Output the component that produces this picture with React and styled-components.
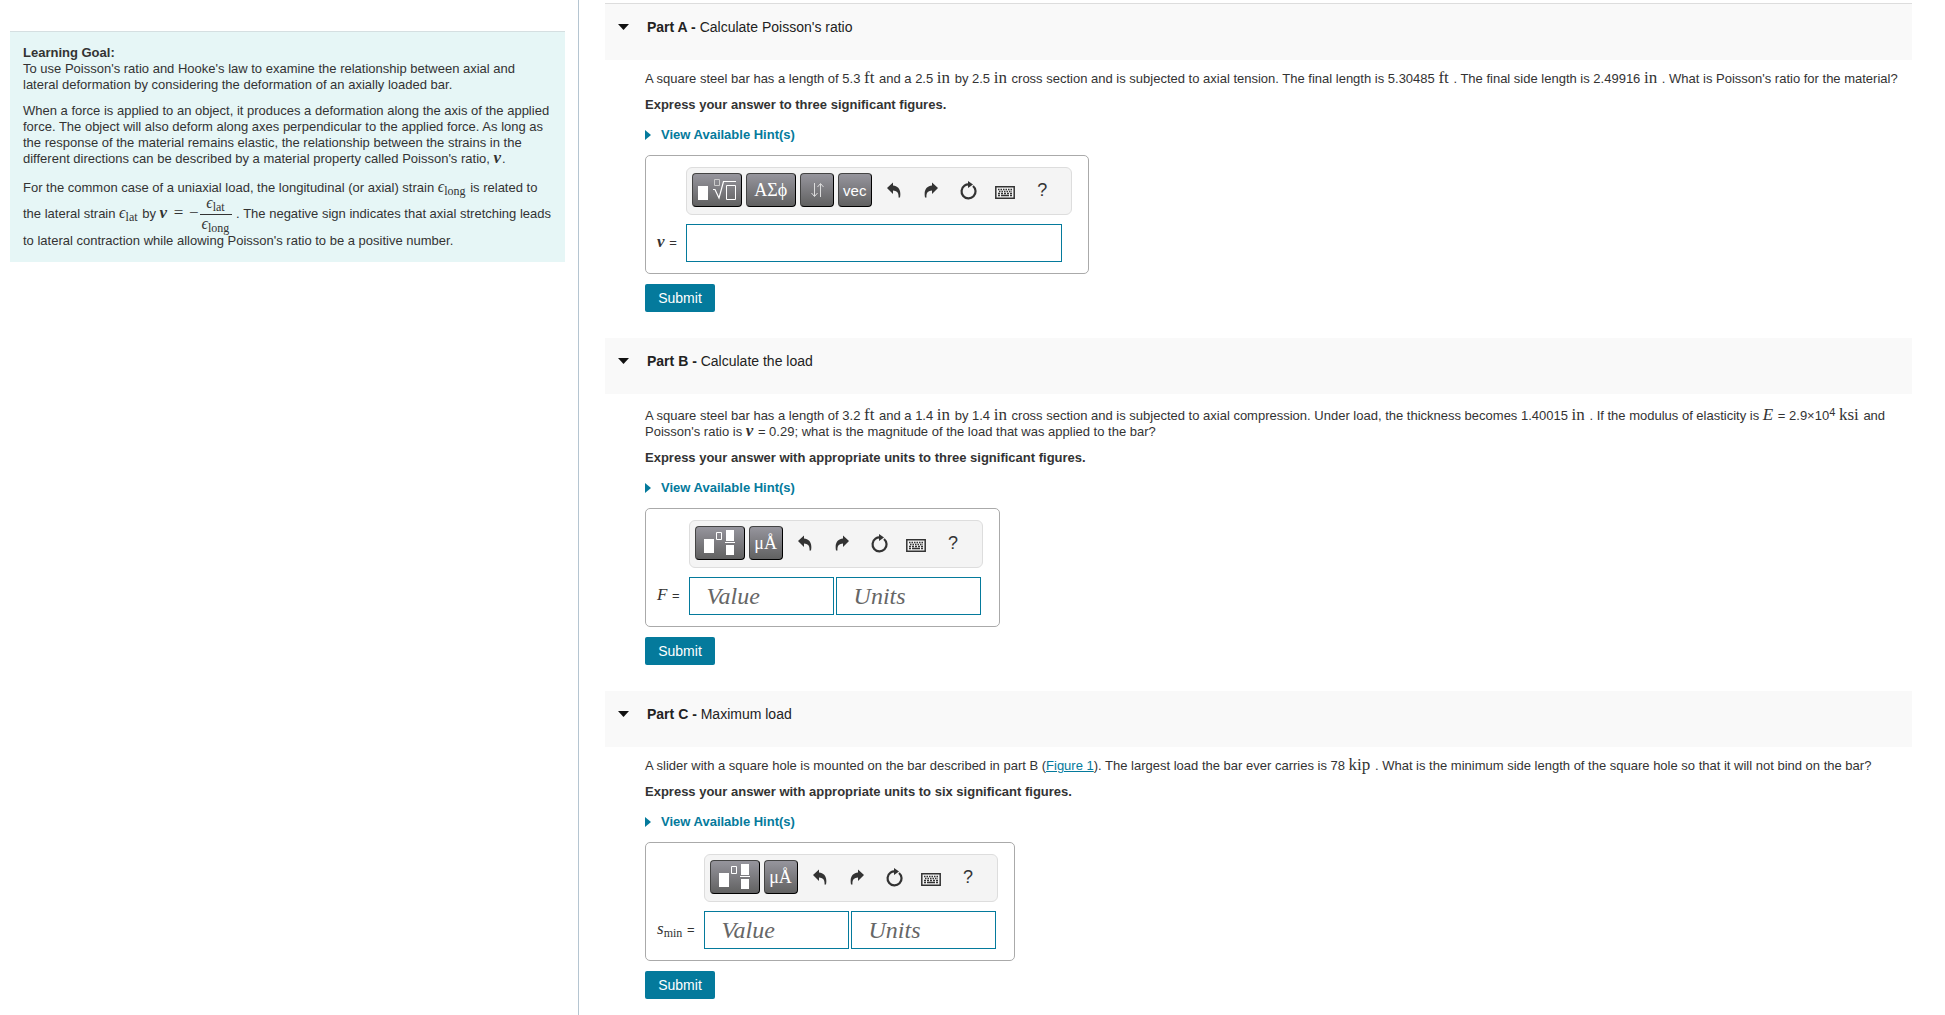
import React from 'react';
import styled, { createGlobalStyle } from 'styled-components';

const teal = '#047a9c';

const GlobalStyle = createGlobalStyle`
  * {
    box-sizing: border-box;
  }
  body {
    margin: 0;
    background: #fff;
    color: #333;
    font: 13px/16px "Liberation Sans", Arial, sans-serif;
  }
  button, input {
    font-family: inherit;
  }
`;

const Page = styled.div`
  display: grid;
  grid-template-columns: minmax(300px, 579px) minmax(0, 1fr);
  min-height: 100vh;
`;

const Sidebar = styled.aside`
  padding: 31px 13px 0 10px;
  border-right: 1px solid #b5c5d1;
`;

const Goal = styled.section`
  padding: 13px;
  border-top: 1px solid #d5dfe1;
  background: #e6f6f6;
`;

const GoalTitle = styled.h1`
  margin: 0;
  font-size: 13px;
  line-height: 16px;
`;

const GoalText = styled.p`
  margin: 0 0 ${({ gap = 10 }) => gap}px;
`;

const Content = styled.main`
  padding: 3px 33px 15px 26px;
`;

const PartSection = styled.section`
  margin-bottom: 26px;
`;

const PartHeader = styled.h2`
  margin: 0;
  padding: 15px 13px 25px;
  border-top: ${({ first }) => (first ? '1px solid #ddd' : '0')};
  background: #f9f9f9;
  font-size: 14px;
  line-height: 16px;
`;

const PartToggle = styled.button`
  display: flex;
  align-items: center;
  gap: 18px;
  padding: 0;
  border: 0;
  background: none;
  color: #222;
  font-size: 14px;
  line-height: 16px;
  cursor: pointer;
`;

const PartBody = styled.div`
  padding: 11px 0 0 40px;
`;

const Question = styled.p`
  margin: 0 0 10px;
`;

const Instruction = styled.p`
  margin: 0 0 14px;
  font-weight: bold;
`;

const Hint = styled.button`
  display: flex;
  align-items: center;
  gap: 10px;
  margin-bottom: 12px;
  padding: 0;
  border: 0;
  background: none;
  color: ${teal};
  font-size: 13px;
  font-weight: bold;
  line-height: 16px;
  cursor: pointer;
`;

const FigureLink = styled.a`
  color: ${teal};
`;

const MathText = styled.span`
  padding-right: 1px;
  font-family: "Liberation Serif", "Times New Roman", serif;
  font-size: ${({ size = 17 }) => size}px;
  font-style: ${({ italic }) => (italic ? 'italic' : 'normal')};
  font-weight: ${({ heavy }) => (heavy ? 'bold' : 'normal')};
  line-height: 14px;
`;

const Operator = styled(MathText)`
  padding: 0 2px;
`;

const Sub = styled.sub`
  font-size: 12px;
  font-style: normal;
  line-height: 8px;
  vertical-align: -3px;
`;

const Sup = styled.sup`
  font-size: 11px;
  line-height: 14px;
  vertical-align: 4px;
`;

const Fraction = styled.span`
  display: inline-flex;
  flex-direction: column;
  vertical-align: middle;
  text-align: center;
`;

const Numerator = styled.span`
  padding: 0 2px 2px;
  border-bottom: 1px solid #333;
`;

const Denominator = styled.span`
  padding: 2px 2px 0;
`;

const AnswerBox = styled.div`
  display: grid;
  grid-template-columns: auto auto;
  column-gap: 9px;
  row-gap: 9px;
  width: fit-content;
  padding: 11px 16px 11px 11px;
  border: 1px solid #aaa;
  border-radius: 5px;
`;

const Toolbar = styled.div`
  display: flex;
  align-items: flex-start;
  grid-column: 2;
  height: 48px;
  padding: 5px 10px 0 5px;
  border: 1px solid #ddd;
  border-radius: 6px;
  background: #f4f4f4;
`;

const PaletteButton = styled.button`
  display: flex;
  align-items: center;
  justify-content: center;
  width: ${({ wide }) => (wide ? 50 : 34)}px;
  height: 34px;
  margin-right: 4px;
  padding: 0;
  border: 1px solid #000;
  border-top-color: #444;
  border-left-color: #444;
  border-radius: 4px;
  background: linear-gradient(#96959d, #616161);
  color: #fff;
  font-size: 15px;
`;

const SerifLabel = styled.span`
  font-family: "Liberation Serif", "Times New Roman", serif;
  font-size: 18px;
`;

const ToolButton = styled.button`
  display: flex;
  align-items: center;
  justify-content: center;
  width: 37px;
  height: 34px;
  padding: 0;
  border: 0;
  background: none;
  color: #333;
  font-size: 18px;
`;

const AnswerLabel = styled.label`
  align-self: center;
`;

const Fields = styled.div`
  display: flex;
  gap: 2px;
`;

const Field = styled.input`
  width: ${({ wide }) => (wide ? 376 : 145)}px;
  height: 38px;
  padding: 0 17px;
  border: 1px solid ${teal};
  border-radius: 0;
  background: #fff;
  font: italic 24px "Liberation Serif", "Times New Roman", serif;

  &::placeholder {
    color: #666;
    opacity: 1;
  }
`;

const Submit = styled.button`
  display: block;
  width: 70px;
  height: 28px;
  margin-top: 10px;
  padding: 0;
  border: 0;
  border-radius: 2px;
  background: ${teal};
  color: #fff;
  font-size: 14px;
`;

const ArrowDown = () => (
  <svg width="11" height="6" viewBox="0 0 11 6" aria-hidden="true">
    <path d="M0 0h11L5.5 6z" fill="#111" />
  </svg>
);

const ArrowRight = () => (
  <svg width="6" height="10" viewBox="0 0 6 10" aria-hidden="true">
    <path d="M0 0l6 5-6 5z" fill={teal} />
  </svg>
);

const RootIcon = () => (
  <svg width="38" height="22" viewBox="0 0 38 22" fill="none" stroke="#fff" aria-hidden="true">
    <path d="M0 7h10v14H0z" fill="#fff" stroke="none" />
    <path d="M16.5.5h5v6h-5z" stroke="#ccc" />
    <path d="M15 10.5h2L21 19l4.5-16.500H38" strokeWidth="1.2" />
    <path d="M28.5 6.500h9v14h-9z" />
  </svg>
);

const TemplateIcon = () => (
  <svg width="32" height="26" viewBox="0 0 32 26" fill="#fff" aria-hidden="true">
    <path d="M0 9h10v14H0z" />
    <path d="M12.5 2.5h5v7h-5z" fill="none" stroke="#fff" />
    <path d="M22 0h8v11h-8zM21 12h10v1H21zM22 15h8v10h-8z" />
  </svg>
);

const UpDownIcon = () => (
  <svg width="14" height="16" viewBox="0 0 14 16" fill="none" stroke="#ddd" aria-hidden="true">
    <path d="M4.5 1v13M1.5 11l3 3.500 3-3.500M10.5 15V2M7.5 5l3-3.500 3 3.500" />
  </svg>
);

const UndoIcon = ({ flipped }) => (
  <svg width="14" height="16" viewBox="0 0 14 16" aria-hidden="true">
    <path
      d="M0 6L6 .5V3.500C11 4 14.5 7.500 13 15.500H11.500C12 11 10 8.700 6 8.500V12z"
      fill="#333"
      transform={flipped ? 'translate(14 0) scale(-1 1)' : undefined}
    />
  </svg>
);

const ResetIcon = () => (
  <svg width="17" height="19" viewBox="0 0 17 19" fill="none" aria-hidden="true">
    <path d="M13 5A7 7 0 1 1 4.500 4.700Q6.500 3.300 9 3.500" stroke="#333" strokeWidth="2.2" />
    <path d="M8 0l5 3.500L8 7z" fill="#333" />
  </svg>
);

const KeyboardIcon = () => (
  <svg width="20" height="18" viewBox="0 -5 20 18" fill="none" stroke="#333" aria-hidden="true">
    <path d="M.8.8h18.400v11.400H.8z" strokeWidth="1.5" />
    <path d="M3 3.500h14M4 5.500h13" strokeWidth="1.3" strokeDasharray="1.5 1" />
    <path d="M3 7.500h14" strokeWidth="1.3" strokeDasharray="2 1" />
    <path d="M3 9.500h2M6 9.500h8M15 9.500h2" strokeWidth="1.5" />
  </svg>
);

const EditTools = () => (
  <>
    <ToolButton type="button" aria-label="Undo"><UndoIcon /></ToolButton>
    <ToolButton type="button" aria-label="Redo"><UndoIcon flipped /></ToolButton>
    <ToolButton type="button" aria-label="Reset"><ResetIcon /></ToolButton>
    <ToolButton type="button" aria-label="Keyboard shortcuts"><KeyboardIcon /></ToolButton>
    <ToolButton type="button" aria-label="Help">?</ToolButton>
  </>
);

const Unit = ({ children }) => <MathText>{children}</MathText>;
const Nu = () => <MathText italic heavy>ν</MathText>;
const Strain = ({ kind }) => <MathText italic size={16}>ϵ<Sub>{kind}</Sub></MathText>;

const ValueUnitsAnswer = ({ id, symbol }) => (
  <AnswerBox>
    <Toolbar>
      <PaletteButton type="button" wide aria-label="Templates"><TemplateIcon /></PaletteButton>
      <PaletteButton type="button"><SerifLabel>μÅ</SerifLabel></PaletteButton>
      <EditTools />
    </Toolbar>
    <AnswerLabel htmlFor={`${id}-value`}>{symbol} =</AnswerLabel>
    <Fields>
      <Field id={`${id}-value`} placeholder="Value" />
      <Field aria-label="Units" placeholder="Units" />
    </Fields>
  </AnswerBox>
);

const Part = ({ name, title, first, question, instruction, children }) => (
  <PartSection>
    <PartHeader first={first}>
      <PartToggle type="button" aria-expanded="true">
        <ArrowDown />
        <span><b>Part {name} -</b> {title}</span>
      </PartToggle>
    </PartHeader>
    <PartBody>
      <Question>{question}</Question>
      <Instruction>{instruction}</Instruction>
      <Hint type="button" aria-expanded="false"><ArrowRight />View Available Hint(s)</Hint>
      {children}
      <Submit type="button">Submit</Submit>
    </PartBody>
  </PartSection>
);

const App = () => (
  <Page>
    <GlobalStyle />
    <Sidebar>
      <Goal>
        <GoalTitle>Learning Goal:</GoalTitle>
        <GoalText>
          To use Poisson's ratio and Hooke's law to examine the relationship between axial and
          lateral deformation by considering the deformation of an axially loaded bar.
        </GoalText>
        <GoalText gap={13}>
          When a force is applied to an object, it produces a deformation along the axis of the
          applied force. The object will also deform along axes perpendicular to the applied force.
          As long as the response of the material remains elastic, the relationship between the
          strains in the different directions can be described by a material property called
          Poisson's ratio, <Nu />.
        </GoalText>
        <GoalText gap={0}>
          For the common case of a uniaxial load, the longitudinal (or axial)
          strain <Strain kind="long" /> is related to the lateral
          strain <Strain kind="lat" /> by <Nu /> <Operator>=</Operator> <MathText>−</MathText>
          <Fraction>
            <Numerator><Strain kind="lat" /></Numerator>
            <Denominator><Strain kind="long" /></Denominator>
          </Fraction>
          {' '}. The negative sign indicates that axial stretching leads to lateral contraction while
          allowing Poisson's ratio to be a positive number.
        </GoalText>
      </Goal>
    </Sidebar>
    <Content>
      <Part
        name="A"
        title="Calculate Poisson's ratio"
        first
        question={(
          <>
            A square steel bar has a length of 5.3 <Unit>ft</Unit> and a 2.5 <Unit>in</Unit> by
            2.5 <Unit>in</Unit> cross section and is subjected to axial tension. The final length is
            5.30485 <Unit>ft</Unit> . The final side length is 2.49916 <Unit>in</Unit> . What is
            Poisson's ratio for the material?
          </>
        )}
        instruction="Express your answer to three significant figures."
      >
        <AnswerBox>
          <Toolbar>
            <PaletteButton type="button" wide aria-label="Templates"><RootIcon /></PaletteButton>
            <PaletteButton type="button" wide><SerifLabel>ΑΣϕ</SerifLabel></PaletteButton>
            <PaletteButton type="button" aria-label="Arrows"><UpDownIcon /></PaletteButton>
            <PaletteButton type="button">vec</PaletteButton>
            <EditTools />
          </Toolbar>
          <AnswerLabel htmlFor="nu-answer"><Nu /> =</AnswerLabel>
          <Field id="nu-answer" wide />
        </AnswerBox>
      </Part>
      <Part
        name="B"
        title="Calculate the load"
        question={(
          <>
            A square steel bar has a length of 3.2 <Unit>ft</Unit> and a 1.4 <Unit>in</Unit> by
            1.4 <Unit>in</Unit> cross section and is subjected to axial compression. Under load, the
            thickness becomes 1.40015 <Unit>in</Unit> . If the modulus of elasticity
            is <MathText italic>E</MathText> = 2.9×10<Sup>4</Sup> <Unit>ksi</Unit> and Poisson's
            ratio is <Nu /> = 0.29; what is the magnitude of the load that was applied to the bar?
          </>
        )}
        instruction="Express your answer with appropriate units to three significant figures."
      >
        <ValueUnitsAnswer id="force" symbol={<MathText italic>F</MathText>} />
      </Part>
      <Part
        name="C"
        title="Maximum load"
        question={(
          <>
            A slider with a square hole is mounted on the bar described in part B
            (<FigureLink href="#figure-1">Figure 1</FigureLink>). The largest load the bar ever
            carries is 78 <Unit>kip</Unit> . What is the minimum side length of the square hole so
            that it will not bind on the bar?
          </>
        )}
        instruction="Express your answer with appropriate units to six significant figures."
      >
        <ValueUnitsAnswer id="side" symbol={<MathText italic>s<Sub>min</Sub></MathText>} />
      </Part>
    </Content>
  </Page>
);

export default App;
